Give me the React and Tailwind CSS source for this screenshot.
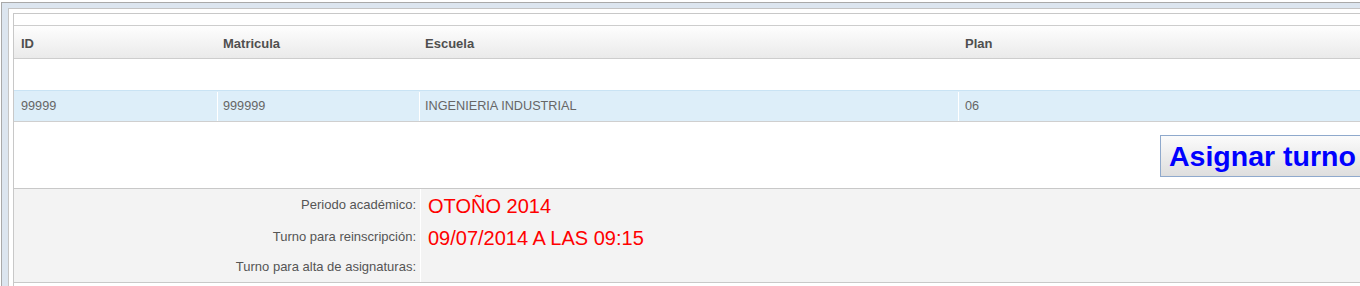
const alumno = {
  id: "99999",
  matricula: "999999",
  escuela: "INGENIERIA INDUSTRIAL",
  plan: "06",
};

const detalles = [
  { label: "Periodo académico:", value: "OTOÑO 2014" },
  { label: "Turno para reinscripción:", value: "09/07/2014 A LAS 09:15" },
  { label: "Turno para alta de asignaturas:", value: "" },
];

const cols = "grid grid-cols-[203px_202px_539px_1fr]";

const App = () => {
  return (
    <div className="w-[1360px] h-[286px] overflow-hidden bg-white pl-[1px] pt-[2px] font-['Liberation_Sans',Arial,sans-serif]">
      {/* marco exterior */}
      <div className="w-[1420px] h-[300px] border-l border-t border-[#a9a9a9] bg-[#dce5ef] pl-[6px] pt-[5px]">
        <div className="h-full border-l border-t border-[#c4c4c4] bg-white pl-[4px] pt-[4px]">
          <div className="w-[1358px] h-full border-l border-t border-[#c8c8c8] pt-[11px]">

            {/* Tabla de alumno */}
            <div className={`${cols} h-[34px] border-y border-[#cdcdcd] bg-gradient-to-b from-[#fefefe] to-[#eaeaea] pt-[4px] text-[13px] font-bold text-[#4f4f4f]`}>
              <div className="flex items-center pl-[7px]">ID</div>
              <div className="flex items-center pl-[5px] border-l border-transparent">Matricula</div>
              <div className="flex items-center pl-[5px] border-l border-transparent">Escuela</div>
              <div className="flex items-center pl-[6px] border-l border-transparent">Plan</div>
            </div>

            <div className="h-[31px]" />

            <div className={`${cols} h-[32px] border-t border-[#c9e3f4] border-b border-b-[#cfcfcf] bg-[#ddeef9] pt-[1px] text-[12.7px] text-[#666]`}>
              <div className="flex items-center pl-[7px]">{alumno.id}</div>
              <div className="flex items-center pl-[5px] border-l border-white">{alumno.matricula}</div>
              <div className="flex items-center pl-[5px] border-l border-white">{alumno.escuela}</div>
              <div className="flex items-center pl-[6px] border-l border-white">{alumno.plan}</div>
            </div>

            {/* Boton */}
            <div className="flex justify-end pt-[13px] pb-[11px]">
              <button className="w-[211px] h-[42px] border border-[#8fa9cc] bg-gradient-to-b from-[#fbfbfb] to-[#dedede] pl-[8px] text-left text-[28.5px] font-bold leading-none text-[#0000ff]">
                Asignar turno
              </button>
            </div>

            {/* Detalles */}
            <div className="border-y border-[#c8c8c8] bg-white flex flex-col gap-[1px]">
              {detalles.map((d, i) => (
                <div key={d.label} className={`grid grid-cols-[406px_1fr] gap-[1px] ${i === 0 ? "h-[31px]" : "h-[30px]"}`}>
                  <div className="flex items-center justify-end bg-[#f3f3f3] pr-[4px] text-[13px] text-[#555]">
                    {d.label}
                  </div>
                  <div className="flex items-center bg-[#f3f3f3] pl-[7px] pt-[2px] text-[20px] text-[#ff0000]">
                    {d.value}
                  </div>
                </div>
              ))}
            </div>

          </div>
        </div>
      </div>
    </div>
  );
};

export default App;
